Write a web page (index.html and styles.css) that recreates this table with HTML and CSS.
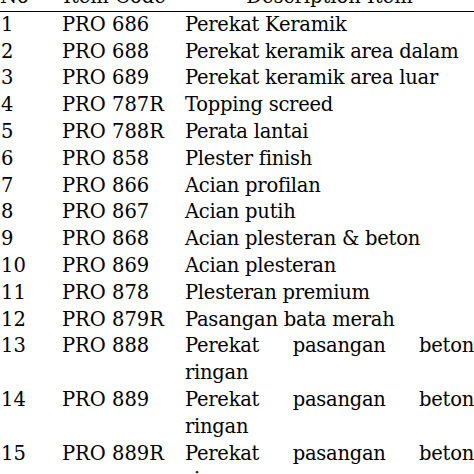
FILE: index.html
```html
<!DOCTYPE html>
<html>
<head>
<meta charset="utf-8">
<link rel="stylesheet" href="styles.css">
</head>
<body>
<table class="items">
  <colgroup>
    <col class="c-no">
    <col class="c-code">
    <col class="c-desc">
  </colgroup>
  <thead>
    <tr>
      <th class="h-no">No</th>
      <th class="h-code">Item Code</th>
      <th class="h-desc">Description Item</th>
    </tr>
  </thead>
  <tbody>
    <tr><td>1</td><td>PRO 686</td><td class="desc">Perekat Keramik</td></tr>
    <tr><td>2</td><td>PRO 688</td><td class="desc">Perekat keramik area dalam</td></tr>
    <tr><td>3</td><td>PRO 689</td><td class="desc">Perekat keramik area luar</td></tr>
    <tr><td>4</td><td>PRO 787R</td><td class="desc">Topping screed</td></tr>
    <tr><td>5</td><td>PRO 788R</td><td class="desc">Perata lantai</td></tr>
    <tr><td>6</td><td>PRO 858</td><td class="desc">Plester finish</td></tr>
    <tr><td>7</td><td>PRO 866</td><td class="desc">Acian profilan</td></tr>
    <tr><td>8</td><td>PRO 867</td><td class="desc">Acian putih</td></tr>
    <tr><td>9</td><td>PRO 868</td><td class="desc">Acian plesteran &amp; beton</td></tr>
    <tr><td>10</td><td>PRO 869</td><td class="desc">Acian plesteran</td></tr>
    <tr><td>11</td><td>PRO 878</td><td class="desc">Plesteran premium</td></tr>
    <tr><td>12</td><td>PRO 879R</td><td class="desc">Pasangan bata merah</td></tr>
    <tr><td>13</td><td>PRO 888</td><td class="desc">Perekat pasangan beton ringan</td></tr>
    <tr><td>14</td><td>PRO 889</td><td class="desc">Perekat pasangan beton ringan</td></tr>
    <tr><td>15</td><td>PRO 889R</td><td class="desc">Perekat pasangan beton ringan</td></tr>
  </tbody>
</table>
</body>
</html>
```
FILE: styles.css
```css
html, body {
  margin: 0;
  padding: 0;
  background: #fff;
  overflow: hidden;
}

.items {
  border-collapse: collapse;
  table-layout: fixed;
  width: 474px;
  margin-top: -16px;
  font-family: "DejaVu Serif", "Liberation Serif", serif;
  font-size: 19.5px;
  line-height: 26.8px;
  color: #000;
}

.c-no { width: 62px; }
.c-code { width: 123px; }
.c-desc { width: 289px; }

.items th {
  font-weight: normal;
  padding: 0;
  border-bottom: 1.5px solid #000;
  white-space: nowrap;
}

.h-no { text-align: left; }
.h-code { text-align: center; padding-right: 18px !important; }
.h-desc { text-align: center; }

.items td {
  padding: 0;
  vertical-align: top;
  text-align: left;
}

.items td:first-child {
  padding-left: 1px;
}

.items td.desc {
  text-align: justify;
  letter-spacing: -0.25px;
}
```
